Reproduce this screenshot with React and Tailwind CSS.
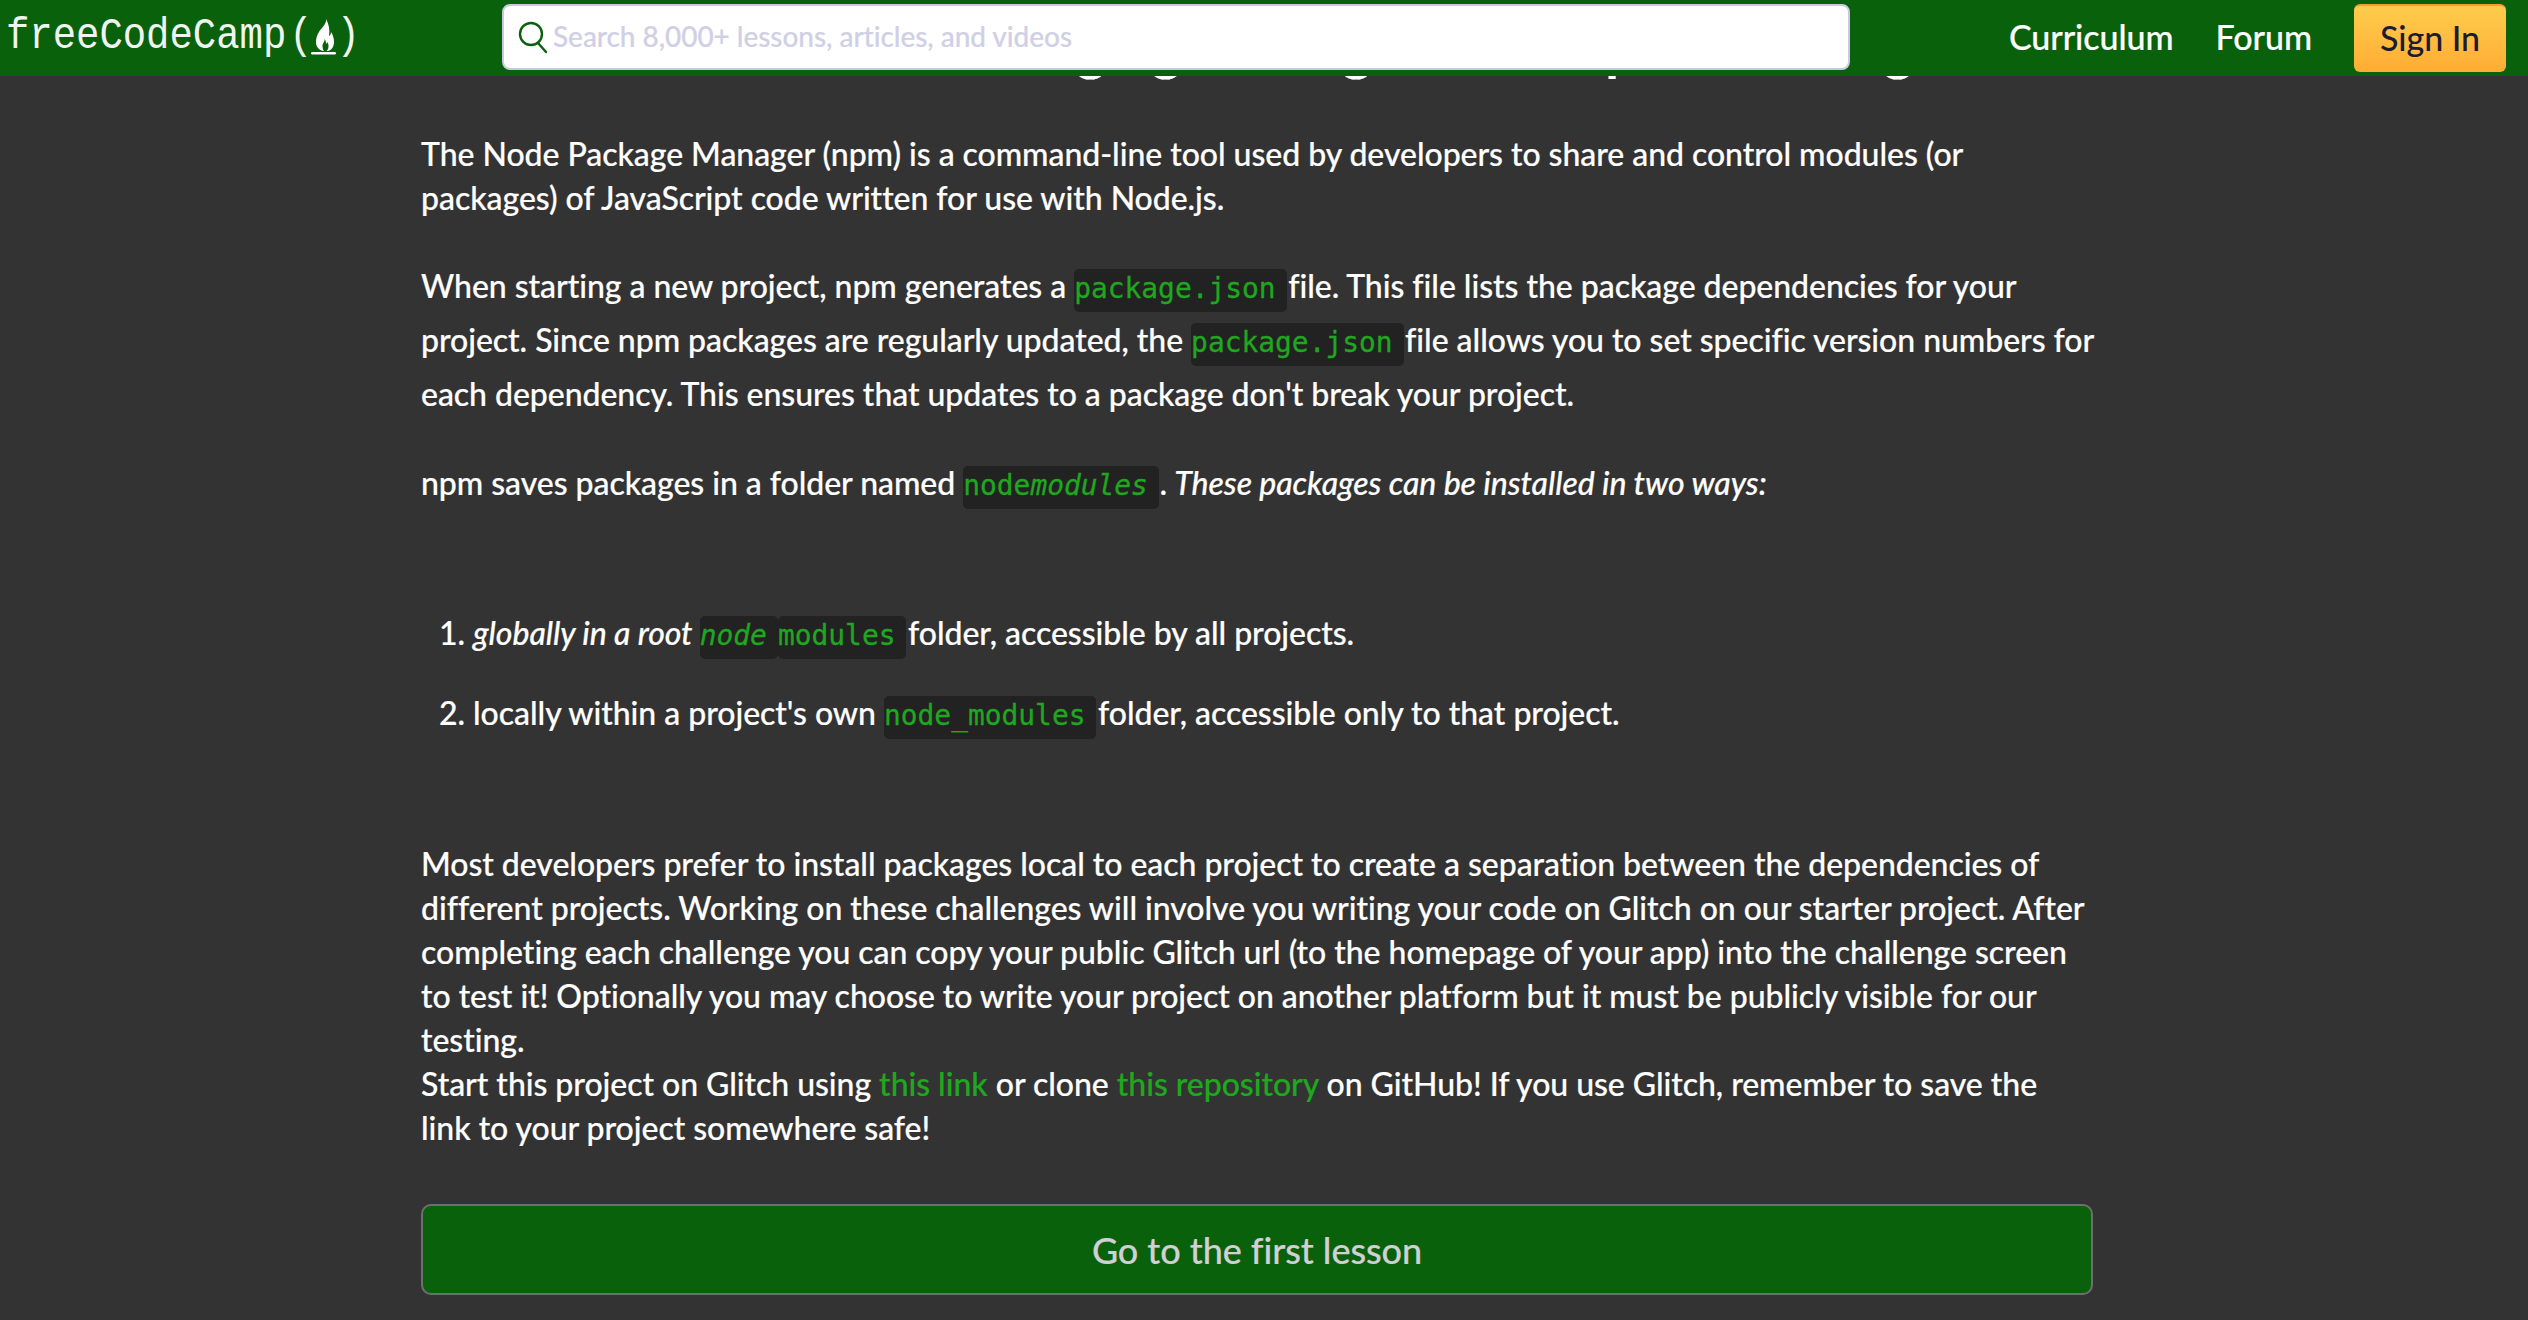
const Code = ({ children, flush }) => (
  <code
    className={`bg-[#222222] text-[#1fa81f] font-['DejaVu_Sans_Mono',monospace] text-[27.9px] tracking-normal [-webkit-text-stroke:0.3px_#1fa81f] leading-none rounded-[5px] pr-[11px] pt-[3px] pb-[7px] ${
      flush ? "" : "-mr-[6.5px]"
    }`}
  >
    {children}
  </code>
);

const Flame = () => (
  <svg width="28" height="38" viewBox="0 0 28 38" className="-mx-[2px]">
    <path
      fill="#fff"
      fillRule="evenodd"
      d="M15 1C16 6 10 10 8 14 6 17 5 20 5 24 5 29 8 32 12 33L17 33C21 32 23 28 23 24 23 20 22 17 20 14 20 16 19 17.5 18 18 19 12 18 6 15 1ZM13.5 21C14 24 11.5 25 11.5 28 11.5 30 12 32 13 33L15.5 33C17 32 17.5 30 17.5 28 17.5 26 17 25 16 24 16 25 15.5 25.5 15 26 15 24 15 23 13.5 21Z"
    />
    <rect x="0" y="34" width="25" height="2.5" rx="1.2" fill="#fff" />
  </svg>
);

const Logo = () => (
  <div className="flex items-center pl-[6px] text-[#f0f4f0] font-['Liberation_Mono',monospace] text-[39px] leading-none">
    <span className="scale-y-[1.15]">freeCodeCamp</span>
    <span className="ml-[3px] scale-y-[1.15]">(</span>
    <Flame />
    <span className="scale-y-[1.15]">)</span>
  </div>
);

const Header = () => (
  <header className="fixed top-0 left-0 right-0 z-10 h-[76px] bg-[#0a610c] flex items-start pt-[4px]">
    <div className="w-[502px] h-[66px] shrink-0 flex items-center">
      <Logo />
    </div>
    <div className="w-[1348px] h-[66px] bg-white border-2 border-[#c8c9de] rounded-[8px] flex items-center pl-[12px]">
      <svg width="34" height="34" viewBox="0 0 34 34" fill="none" stroke="#0a610c" strokeWidth="2.4">
        <circle cx="15" cy="14" r="11" />
        <path d="M22 23l8 9" strokeLinecap="round" />
      </svg>
      <span className="ml-[3px] pb-[3px] text-[#d0d0e5] [-webkit-text-stroke:0.2px_#d0d0e5] text-[28px] leading-none font-medium">
        Search 8,000+ lessons, articles, and videos
      </span>
    </div>
    <nav className="flex items-center ml-auto pr-[22px] h-[68px] text-white text-[34px] font-medium">
      <span className="pb-[2px] [-webkit-text-stroke:0.2px_#fff]">Curriculum</span>
      <span className="ml-[42px] pb-[2px] [-webkit-text-stroke:0.2px_#fff]">Forum</span>
      <span className="ml-[42px] w-[152px] h-[68px] pb-[2px] flex items-center justify-center rounded-[6px] text-[#1b1b32] bg-linear-to-b from-[#fecc4c] to-[#ffac33] border-t-2 border-[#f1a02a]">
        Sign In
      </span>
    </nav>
  </header>
);

export default function App() {
  return (
    <div className="h-[1320px] overflow-hidden bg-[#333333] text-white font-['Lato',sans-serif] font-medium text-[32px] leading-[44px] tracking-[-0.05px]">
      <Header />
      <main className="w-[1680px] ml-[421px] pt-[9px] [-webkit-text-stroke:0.2px_#fff]">
        <h1 className="w-[1672px] text-center text-[56px] leading-[80px] font-bold mb-[43px] whitespace-nowrap">
          Introduction to Managing Packages with Npm Challenges
        </h1>
        <p className="mb-[39px]">
          The Node Package Manager (npm) is a command-line tool used by developers to share and control modules (or
          packages) of JavaScript code written for use with Node.js.
        </p>
        <p className="mb-[35px] leading-[54px]">
          When starting a new project, npm generates a <Code>package.json</Code> file. This file lists the package
          dependencies for your project. Since npm packages are regularly updated, the <Code>package.json</Code> file
          allows you to set specific version numbers for each dependency. This ensures that updates to a package don't
          break your project.
        </p>
        <p className="leading-[54px]">
          npm saves packages in a folder named{" "}
          <Code>
            node<em>modules</em>
          </Code>{" "}
          <em>. These packages can be installed in two ways:</em>
        </p>
        <ol className="list-decimal pl-[52px] mt-[96px] mb-[102px] leading-[54px]">
          <li className="mb-[26px]">
            <em>
              globally in a root <Code flush>node</Code>
            </em>
            <Code>modules</Code> folder, accessible by all projects.
          </li>
          <li>
            locally within a project's own <Code>node_modules</Code> folder, accessible only to that project.
          </li>
        </ol>
        <p className="w-[1672px]">
          Most developers prefer to install packages local to each project to create a separation between the
          dependencies of different projects. Working on these challenges will involve you writing your code on Glitch
          on our starter project. After completing each challenge you can copy your public Glitch url (to the homepage
          of your app) into the challenge screen to test it! Optionally you may choose to write your project on another
          platform but it must be publicly visible for our testing.
          <br />
          Start this project on Glitch using{" "}
          <a className="text-[#1fa81f] [-webkit-text-stroke:0.2px_#1fa81f]">this link</a> or clone{" "}
          <a className="text-[#1fa81f] [-webkit-text-stroke:0.2px_#1fa81f]">this repository</a> on GitHub! If you use
          Glitch, remember to save the link to your project somewhere safe!
        </p>
        <button className="mt-[54px] w-[1672px] h-[91px] bg-[#0a610c] border-2 border-[#6e6e6e] rounded-[10px] text-[#d0d0d5] [-webkit-text-stroke:0.2px_#d0d0d5] text-[36px]">
          Go to the first lesson
        </button>
      </main>
    </div>
  );
}
